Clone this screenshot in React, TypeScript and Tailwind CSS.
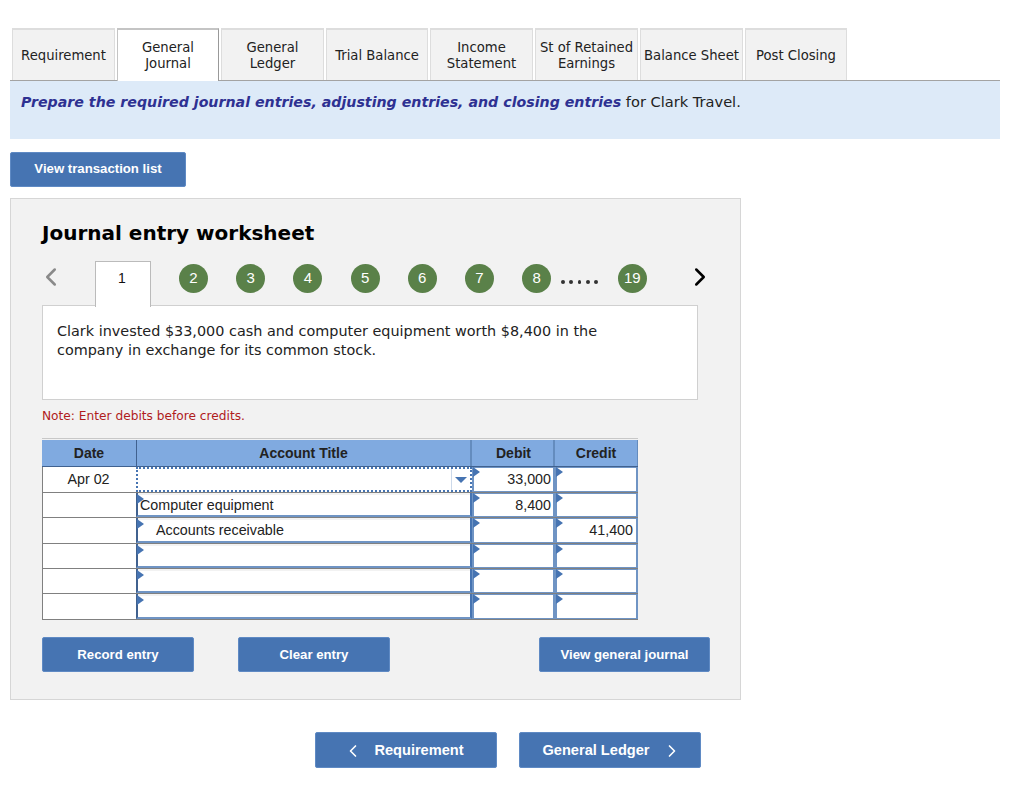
import { ChevronLeft, ChevronRight } from "lucide-react"

const verdana = "font-['DejaVu_Sans',Verdana,sans-serif]"
const arial = "font-['Liberation_Sans',Arial,sans-serif]"

const tabs = [
  { label: "Requirement", w: "w-[103px]" },
  { label: "General\nJournal", w: "w-[102px]", active: true },
  { label: "General\nLedger", w: "w-[103px]" },
  { label: "Trial Balance", w: "w-[102px]" },
  { label: "Income\nStatement", w: "w-[103px]" },
  { label: "St of Retained\nEarnings", w: "w-[103px]" },
  { label: "Balance Sheet", w: "w-[103px]" },
  { label: "Post Closing", w: "w-[102px]" },
]

const steps = ["2", "3", "4", "5", "6", "7", "8"]

const rows = [
  { date: "Apr 02", title: "", debit: "33,000", credit: "", focus: true, h: "h-[26px]" },
  { date: "", title: "Computer equipment", debit: "8,400", credit: "", h: "h-[25px]" },
  { date: "", title: "Accounts receivable", indent: true, debit: "", credit: "41,400", h: "h-[26px]" },
  { date: "", title: "", debit: "", credit: "", h: "h-[25px]" },
  { date: "", title: "", debit: "", credit: "", h: "h-[25px]" },
  { date: "", title: "", debit: "", credit: "", h: "h-[25px]" },
]

function Marker() {
  return (
    <svg className="absolute -left-px -top-px" width="7" height="10" viewBox="0 0 7 10">
      <path d="M0 0 L7 5 L0 10 Z" fill="#4674b2" />
    </svg>
  )
}

function InputCell({ value, pad }: { value: string; pad: string }) {
  return (
    <div className={`relative flex h-full items-center bg-white text-[14.3px] leading-none text-[#222] ${pad}`}>
      <Marker />
      {value}
    </div>
  )
}

function BlueButton({ children, className }: { children: React.ReactNode; className: string }) {
  return (
    <button
      className={`flex items-center justify-center rounded-[2px] border border-[#5f8ac4] bg-[#4674b2] font-bold text-white ${arial} ${className}`}
    >
      {children}
    </button>
  )
}

export default function App() {
  return (
    <div className={`h-[802px] w-[1024px] overflow-hidden bg-white pt-7 pl-[10px] ${verdana}`}>
      {/* tabs */}
      <div className="ml-[2px] flex h-[52px] w-[988px] gap-[2px]">
        {tabs.map((t) => (
          <div
            key={t.label}
            className={`flex ${t.w} items-center justify-center whitespace-pre-line border-x border-t-2 text-center text-[13.2px] leading-[16px] text-[#222] ${
              t.active
                ? "relative z-10 h-[53px] border-[#c4c4c4] border-r-[#999] bg-white"
                : "border-[#ddd] bg-[#f2f2f2] pt-[2px]"
            }`}
          >
            {t.label}
          </div>
        ))}
      </div>
      <div className="h-[59px] w-[990px] border-t border-[#a3a3a3] bg-[#ddeaf8] pl-[11px] pt-[12px] text-[14.6px] leading-[18px] text-[#222]">
        <b className="text-[14.2px] italic text-[#2e3192]">
          Prepare the required journal entries, adjusting entries, and closing entries
        </b>{" "}
        for Clark Travel.
      </div>

      <BlueButton className="mt-[13px] h-[35px] w-[176px] pb-px text-[13.2px]">View transaction list</BlueButton>

      {/* worksheet panel */}
      <div className="mt-[11px] h-[502px] w-[731px] border border-[#d6d6d6] bg-[#f2f2f2] pl-[31px] pt-[20px]">
        <h2 className="text-[20px] font-bold leading-[28px] text-black">Journal entry worksheet</h2>

        <div className="mt-[14px] flex h-[44px] w-[680px] items-start">
          <ChevronLeft className="ml-[-6px] mt-[1px] shrink-0 text-[#8a8a8a]" size={30} strokeWidth={2} />
          <div className={`relative z-10 ml-[29px] flex h-[46px] w-[56px] shrink-0 justify-center border border-b-0 border-[#bbb] bg-white pr-[2px] pt-[7px] text-[14px] leading-[18px] text-[#111] ${arial}`}>
            1
          </div>
          <div className={`ml-[28px] mt-[3px] flex gap-[28.2px] ${arial}`}>
            {steps.map((s) => (
              <div key={s} className="flex h-[29px] w-[29px] shrink-0 items-center justify-center rounded-full bg-[#5a8149] text-[15px] text-white">
                {s}
              </div>
            ))}
          </div>
          <div className="ml-[10px] mt-[19px] flex gap-[4.8px]">
            {[0, 1, 2, 3, 4].map((i) => (
              <span key={i} className="h-[3.5px] w-[3.5px] rounded-full bg-[#333]" />
            ))}
          </div>
          <div className={`ml-[20px] mt-[3px] flex h-[29px] w-[29px] shrink-0 items-center justify-center rounded-full bg-[#5a8149] text-[15px] text-white ${arial}`}>
            19
          </div>
          <ChevronRight className="ml-[38px] mt-[1px] shrink-0 text-black" size={30} strokeWidth={2} />
        </div>

        <div className="h-[95px] w-[656px] border border-[#d0d0d0] bg-white pl-[14px] pt-[15px] text-[14.4px] leading-[20px] text-[#222]">
          Clark invested $33,000 cash and computer equipment worth $8,400 in the
          <br />
          <span className="relative -top-px">company in exchange for its common stock.</span>
        </div>

        <p className="mt-[8px] text-[12.2px] leading-[16px] text-[#b01c1c]">Note: Enter debits before credits.</p>

        {/* journal table */}
        <div className={`mt-[14px] w-[596px] border-t border-[#c8c8c8] pt-px ${arial}`}>
          <div className="flex h-[27px] border-b border-[#40618f] bg-[#80aae0] text-[14px] font-bold text-[#222]">
            <div className="flex w-[95px] items-center justify-center border-r border-[#40618f]">Date</div>
            <div className="flex w-[335px] items-center justify-center border-r-2 border-[#648cbe]">Account Title</div>
            <div className="flex w-[83px] items-center justify-center border-r-2 border-[#648cbe] pl-[2px]">Debit</div>
            <div className="flex w-[83px] items-center justify-center border-r border-[#648cbe]">Credit</div>
          </div>
          <div className="border-b border-l border-[#808080]">
            {rows.map((r, i) => (
              <div key={i} className={`flex ${r.h} border-b border-[#808080] last:border-b-0`}>
                <div className="flex w-[93px] items-center justify-center bg-white pr-[2px] text-[14.3px] text-[#222]">{r.date}</div>
                <div className={`h-full w-[336px] ${r.focus ? "" : "border-x-2 border-b-2 border-l-[#40618f] border-r-[#4674b2] border-b-[#6f94c4] pt-[2px]"}`}>
                  {r.focus ? (
                    <div className="flex h-full items-center justify-end border-2 border-dotted border-[#4674b2] bg-white">
                      <div className="flex h-full w-[19px] items-center justify-center border-l border-[#ccd9ea]">
                        <svg width="12" height="6" viewBox="0 0 12 6">
                          <path d="M0 0 H12 L6 6 Z" fill="#4674b2" />
                        </svg>
                      </div>
                    </div>
                  ) : (
                    <InputCell value={r.title} pad={r.indent ? "pl-[18px]" : "pl-[2px]"} />
                  )}
                </div>
                <div className="h-full w-[83px] border-y border-l-2 border-r-2 border-[#6f94c4]">
                  <InputCell value={r.debit} pad="justify-end pr-[2px]" />
                </div>
                <div className="h-full w-[83px] border-y border-l-2 border-r-2 border-[#6f94c4]">
                  <InputCell value={r.credit} pad="justify-end pr-[3px]" />
                </div>
              </div>
            ))}
          </div>
        </div>

        <div className="mt-[17px] flex text-[13.2px]">
          <BlueButton className="h-[35px] w-[152px]">Record entry</BlueButton>
          <BlueButton className="ml-[44px] h-[35px] w-[152px]">Clear entry</BlueButton>
          <BlueButton className="ml-[149px] h-[35px] w-[171px]">View general journal</BlueButton>
        </div>
      </div>

      {/* bottom nav */}
      <div className="ml-[305px] mt-[32px] flex gap-[22px] text-[14.6px]">
        <BlueButton className="h-[36px] w-[182px] gap-[11px] pr-[5px] pt-px">
          <ChevronLeft size={20} strokeWidth={2} />
          Requirement
        </BlueButton>
        <BlueButton className="h-[36px] w-[182px] gap-[12px] pl-[4px] pt-px">
          General Ledger
          <ChevronRight size={20} strokeWidth={2} />
        </BlueButton>
      </div>
    </div>
  )
}
